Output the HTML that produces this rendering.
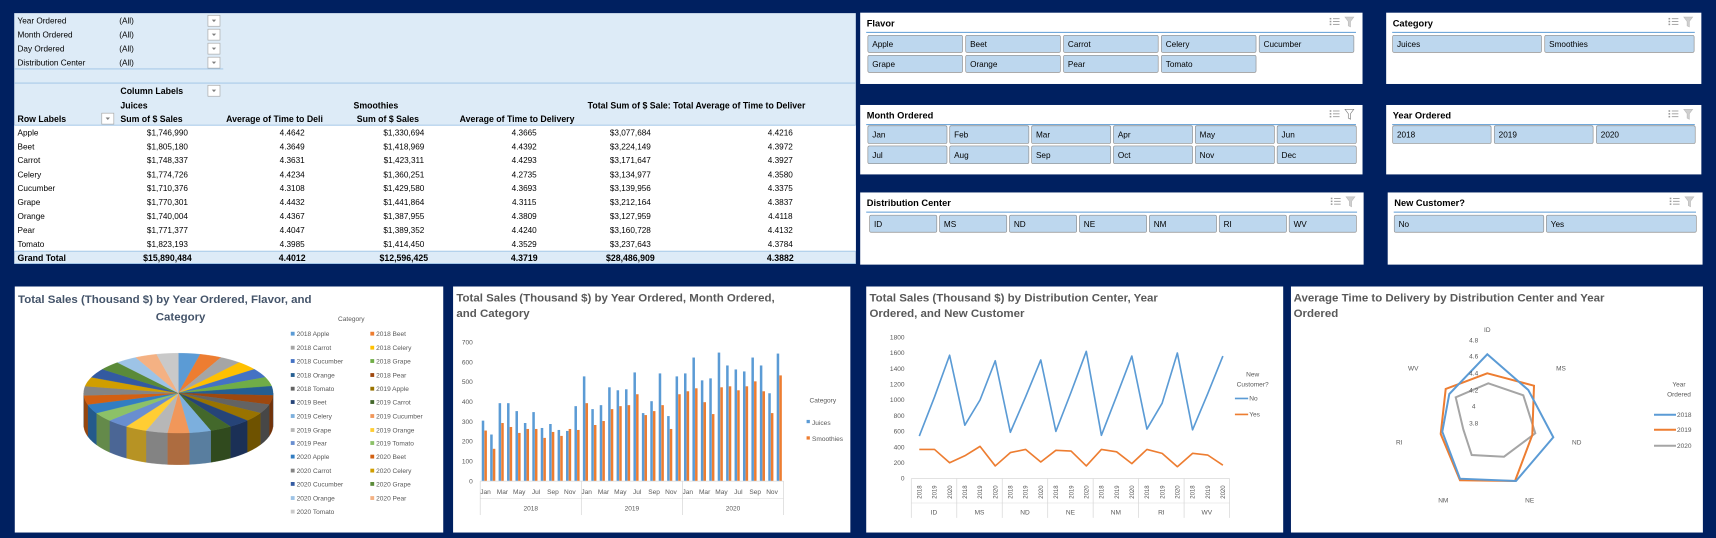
<!DOCTYPE html>
<html><head><meta charset="utf-8"><style>
html,body{margin:0;padding:0;background:#002060;}
svg{display:block;font-family:"Liberation Sans",sans-serif;}
</style></head><body>
<svg id="s" width="1716" height="538" viewBox="0 0 1716 538" xmlns="http://www.w3.org/2000/svg">
<rect width="1716" height="538" fill="#002060"/>
<g id="d" transform="scale(1.0944,1.0935)">
<!-- pivot -->
<rect x="13" y="12" width="769" height="229" fill="#ddebf7"/>
<rect x="13" y="114.5" width="769" height="115" fill="#ffffff"/>
<line x1="13" y1="63" x2="204" y2="63" stroke="#9bc2e6" stroke-width="0.8"/>
<line x1="13" y1="76" x2="782" y2="76" stroke="#9bc2e6" stroke-width="0.8"/>
<line x1="13" y1="114.5" x2="782" y2="114.5" stroke="#9bc2e6" stroke-width="0.8"/>
<line x1="13" y1="229.7" x2="782" y2="229.7" stroke="#9bc2e6" stroke-width="0.8"/>
<line x1="13" y1="241" x2="782" y2="241" stroke="#9bc2e6" stroke-width="0.8"/>
<g id="piv" font-size="7.5" fill="#000"></g>
<!-- slicers -->
<g id="sl"></g>
<!-- charts -->
<rect x="13.5" y="262" width="391.5" height="225" fill="#fff"/>
<rect x="414" y="262" width="363" height="225" fill="#fff"/>
<rect x="791.5" y="262" width="381" height="225" fill="#fff"/>
<rect x="1179.6" y="262" width="376.4" height="225" fill="#fff"/>
<g font-weight="bold" font-size="10.5" fill="#595959">
<text x="16.5" y="277" fill="#44546a">Total Sales (Thousand $) by Year Ordered, Flavor, and</text>
<text x="165" y="293" text-anchor="middle" fill="#44546a">Category</text>
<text x="417" y="275.5">Total Sales (Thousand $) by Year Ordered, Month Ordered,</text>
<text x="417" y="290">and Category</text>
<text x="794.5" y="275.5">Total Sales (Thousand $) by Distribution Center, Year</text>
<text x="794.5" y="290">Ordered, and New Customer</text>
<text x="1182" y="275.5">Average Time to Delivery by Distribution Center and Year</text>
<text x="1182" y="290">Ordered</text>
</g>
<g id="pie"></g>
<g id="bar" font-size="6" fill="#595959"></g>
<g id="line" font-size="6" fill="#595959"></g>
</g>
<g id="radar" font-size="6.5" fill="#595959"></g>
</svg>
<script>
var NS="http://www.w3.org/2000/svg";
function el(p,t,a,txt){var e=document.createElementNS(NS,t);for(var k in a)e.setAttribute(k,a[k]);if(txt!==undefined)e.textContent=txt;p.appendChild(e);return e;}
function dd(p,x,y){el(p,'rect',{x:x,y:y,width:11,height:10,fill:'#fff',stroke:'#a6a6a6','stroke-width':0.6});el(p,'path',{d:'M'+(x+3.5)+' '+(y+4)+'h4l-2 2.2z',fill:'#7f7f7f'});}
// pivot
var pv=document.getElementById('piv');
var fl=['Year Ordered','Month Ordered','Day Ordered','Distribution Center'],fy=[19,31.7,44.5,57.3];
fl.forEach(function(t,i){el(pv,'text',{x:16,y:fy[i]+2.7},t);el(pv,'text',{x:109,y:fy[i]+2.7},'(All)');dd(pv,190,fy[i]-5);});
var b={'font-weight':'bold','font-size':8};
function bt(x,y,t,a){var o={x:x,y:y,'font-weight':'bold','font-size':8};if(a)o['text-anchor']=a;return el(pv,'text',o,t);}
bt(110,86,'Column Labels');dd(pv,190,78);
bt(110,99,'Juices');bt(323,99,'Smoothies');bt(537,99,'Total Sum of $ Sale: Total Average of Time to Deliver');
bt(16,111.5,'Row Labels');dd(pv,93,103.5);bt(110,111.5,'Sum of $ Sales');bt(206.6,111.5,'Average of Time to Deli');bt(326,111.5,'Sum of $ Sales');bt(420,111.5,'Average of Time to Delivery');
var rows=[['Apple','$1,746,990','4.4642','$1,330,694','4.3665','$3,077,684','4.4216'],['Beet','$1,805,180','4.3649','$1,418,969','4.4392','$3,224,149','4.3972'],['Carrot','$1,748,337','4.3631','$1,423,311','4.4293','$3,171,647','4.3927'],['Celery','$1,774,726','4.4234','$1,360,251','4.2735','$3,134,977','4.3580'],['Cucumber','$1,710,376','4.3108','$1,429,580','4.3693','$3,139,956','4.3375'],['Grape','$1,770,301','4.4432','$1,441,864','4.3115','$3,212,164','4.3837'],['Orange','$1,740,004','4.4367','$1,387,955','4.3809','$3,127,959','4.4118'],['Pear','$1,771,377','4.4047','$1,389,352','4.4240','$3,160,728','4.4132'],['Tomato','$1,823,193','4.3985','$1,414,450','4.3529','$3,237,643','4.3784']];
var cx=[153,267,369,479,576,713];
rows.forEach(function(r,i){var y=121+i*12.8+2.7;el(pv,'text',{x:16,y:y},r[0]);for(var j=1;j<7;j++)el(pv,'text',{x:cx[j-1],y:y,'text-anchor':'middle'},r[j]);});
var gt=['$15,890,484','4.4012','$12,596,425','4.3719','$28,486,909','4.3882'];
bt(16,238.5,'Grand Total');gt.forEach(function(t,j){bt(cx[j],238.5,t,'middle');});
// slicers
var sl=document.getElementById('sl');
function slicer(x,y,w,h,title,btns,rowsY,bh,funnelDark){
 el(sl,'rect',{x:x,y:y,width:w,height:h,fill:'#fff'});
 el(sl,'text',{x:x+6,y:y+12.5,'font-weight':'bold','font-size':8.5},title);
 el(sl,'line',{x1:x+5.5,y1:y+18,x2:x+w-6,y2:y+18,stroke:'#5b9bd5','stroke-width':0.9});
 var ix=x+w-30,iy=y+4;
 for(var k=0;k<3;k++){el(sl,'line',{x1:ix+3,y1:iy+1.5+k*2.6,x2:ix+9,y2:iy+1.5+k*2.6,stroke:'#9a9a9a','stroke-width':0.8});el(sl,'rect',{x:ix,y:iy+0.8+k*2.6,width:1.5,height:1.4,fill:'#9a9a9a'});}
 el(sl,'path',{d:'M'+(ix+14)+' '+iy+'h8l-3 4v5l-2 -1v-4z',fill:funnelDark?'none':'#cfcfcf',stroke:funnelDark?'#7f7f7f':'#bdbdbd','stroke-width':0.6});
 btns.forEach(function(bb){el(sl,'rect',{x:bb[0],y:bb[1],width:bb[2],height:bh,rx:1.5,fill:'#bdd7ee',stroke:'#8f8f8f','stroke-width':0.6});el(sl,'text',{x:bb[0]+4,y:bb[1]+bh/2+2.8,'font-size':7.5},bb[3]);});
}
function grid(names,x0,step,w,ys,perRow){return names.map(function(n,i){return [x0+(i%perRow)*step,ys[Math.floor(i/perRow)],w,n];});}
slicer(786,11.6,459,65.2,'Flavor',grid(['Apple','Beet','Carrot','Celery','Cucumber','Grape','Orange','Pear','Tomato'],793,89.4,86.5,[32.3,50.6],5),0,15.6);
slicer(1266.6,11.6,288,65.2,'Category',[[1272.5,32.3,136,'Juices'],[1411.5,32.3,136.5,'Smoothies']],0,15.6);
slicer(786,96,459,63.5,'Month Ordered',grid(['Jan','Feb','Mar','Apr','May','Jun','Jul','Aug','Sep','Oct','Nov','Dec'],793,74.8,72.3,[115,133.5],6),0,16.2,true);
slicer(1266.6,96,288,63.5,'Year Ordered',[[1272.5,115,90,'2018'],[1365.4,115,90.3,'2019'],[1458.7,115,90.3,'2020']],0,16.2);
slicer(786,176,460,66,'Distribution Center',grid(['ID','MS','ND','NE','NM','RI','WV'],794.6,63.9,61.4,[196.8],7),0,15.6);
slicer(1268,176,287.7,66,'New Customer?',[[1274,196.8,136.6,'No'],[1413,196.8,137,'Yes']],0,15.6);
// pie
var cols=['#5b9bd5','#ed7d31','#a5a5a5','#ffc000','#4472c4','#70ad47','#255e91','#9e480e','#636363','#997300','#264478','#43682b','#7cafdd','#f1975a','#b7b7b7','#ffcd33','#698ed0','#8cc168','#327dc2','#d26012','#848484','#d09e00','#335aa1','#5a8a39','#9dc3e6','#f4b183','#c9c9c9'];
var names=[];['2018','2019','2020'].forEach(function(y){['Apple','Beet','Carrot','Celery','Cucumber','Grape','Orange','Pear','Tomato'].forEach(function(f){names.push(y+' '+f);});});
function dark(c,f){var n=parseInt(c.slice(1),16);var r=(n>>16)*f|0,g=((n>>8)&255)*f|0,bb=(n&255)*f|0;return 'rgb('+r+','+g+','+bb+')';}
var pie=document.getElementById('pie');var PX=163,PY=359.5,RX=86.5,RY=36.5,DP=29,N=27;
function P(t,dy){return [PX+RX*Math.sin(t),PY-RY*Math.cos(t)+(dy||0)];}
for(var i=0;i<N;i++){var a1=i*2*Math.PI/N,a2=(i+1)*2*Math.PI/N;var s=Math.max(a1,Math.PI/2),e=Math.min(a2,3*Math.PI/2);
 if(s<e){var pts=[];for(var k=0;k<=8;k++){pts.push(P(s+(e-s)*k/8));}for(var k=8;k>=0;k--){pts.push(P(s+(e-s)*k/8,DP));}
 el(pie,'path',{d:'M'+pts.map(function(p){return p[0].toFixed(2)+' '+p[1].toFixed(2);}).join('L')+'Z',fill:dark(cols[i],0.72),stroke:dark(cols[i],0.72),'stroke-width':0.3});}}
for(var i=0;i<N;i++){var a1=i*2*Math.PI/N,a2=(i+1)*2*Math.PI/N;var pts=[[PX,PY]];for(var k=0;k<=6;k++)pts.push(P(a1+(a2-a1)*k/6));
 el(pie,'path',{d:'M'+pts.map(function(p){return p[0].toFixed(2)+' '+p[1].toFixed(2);}).join('L')+'Z',fill:cols[i],stroke:cols[i],'stroke-width':0.3});}
el(pie,'text',{x:321,y:293.5,'font-size':6,fill:'#595959','text-anchor':'middle'},'Category');
var ly=[305.6,318.4,330.6,343.4,355.9,368.1,380.9,393.7,405.6,418,430.8,443,455.9,468.3];
names.forEach(function(n,i){var r=Math.floor(i/2),c=i%2;var x=c?338.4:265.7;el(pie,'rect',{x:x,y:ly[r]-2.2,width:3.5,height:3.5,fill:cols[i]});el(pie,'text',{x:x+5.3,y:ly[r]+1.8,'font-size':6,fill:'#595959'},n);});
// bar chart
var bar=document.getElementById('bar');
var J=[305,235,393,393,353,293,348,268,288,258,253,378,528,363,383,473,458,463,548,343,403,543,328,528,543,623,508,518,648,583,563,553,623,583,443,643];
var S=[255,163,293,273,243,263,263,218,248,228,263,258,393,283,303,363,378,383,438,333,353,383,263,438,453,468,398,338,473,478,458,478,503,453,343,533];
var bx0=438.8,bx1=716,by0=440,bk=127/700,sw=(bx1-bx0)/36;
for(var v=0;v<=700;v+=100)el(bar,'text',{x:432,y:by0-v*bk+2,'text-anchor':'end'},v);
for(var i=0;i<36;i++){var x=bx0+i*sw;el(bar,'rect',{x:x+1.4,y:by0-J[i]*bk,width:2.3,height:J[i]*bk,fill:'#5b9bd5'});el(bar,'rect',{x:x+3.8,y:by0-S[i]*bk,width:2.3,height:S[i]*bk,fill:'#ed7d31'});
 if(i%2==0)el(bar,'text',{x:x+sw/2+1,y:452,'text-anchor':'middle'},['Jan','Mar','May','Jul','Sep','Nov'][(i%12)/2]);}
el(bar,'line',{x1:bx0,y1:by0,x2:bx1,y2:by0,stroke:'#d9d9d9','stroke-width':0.7});
for(var k=0;k<4;k++){var x=bx0+k*12*sw;el(bar,'line',{x1:x,y1:by0,x2:x,y2:471,stroke:'#d9d9d9','stroke-width':0.7});}
el(bar,'line',{x1:bx0,y1:456,x2:bx1,y2:456,stroke:'#d9d9d9','stroke-width':0.5});
['2018','2019','2020'].forEach(function(y,k){el(bar,'text',{x:bx0+(k+0.5)*12*sw,y:467,'text-anchor':'middle'},y);});
el(bar,'text',{x:739.7,y:368},'Category');
el(bar,'rect',{x:737,y:384,width:3,height:3,fill:'#5b9bd5'});el(bar,'text',{x:742,y:388.5},'Juices');
el(bar,'rect',{x:737,y:399,width:3,height:3,fill:'#ed7d31'});el(bar,'text',{x:742,y:403.5},'Smoothies');
// line chart
var ln=document.getElementById('line');
var No=[540,1040,1570,680,1000,1500,590,1040,1510,600,1100,1620,550,1050,1560,630,960,1600,620,1080,1560];
var Ye=[370,370,200,290,410,160,330,370,210,360,350,160,370,340,190,370,320,150,320,300,170];
var ly0=437.6,lk=(437.6-308.4)/1800,lx0=832.7,lx1=1123.5;
for(var v=0;v<=1800;v+=200)el(ln,'text',{x:826.5,y:ly0-v*lk+2,'text-anchor':'end'},v);
function pl(a,c){el(ln,'polyline',{points:a.map(function(v,i){return (840+13.87*i).toFixed(1)+','+(ly0-v*lk).toFixed(1);}).join(' '),fill:'none',stroke:c,'stroke-width':1.5,'stroke-linejoin':'round'});}
pl(No,'#5b9bd5');pl(Ye,'#ed7d31');
el(ln,'line',{x1:lx0,y1:ly0,x2:lx1,y2:ly0,stroke:'#d9d9d9','stroke-width':0.7});
el(ln,'line',{x1:lx0,y1:460,x2:lx1,y2:460,stroke:'#d9d9d9','stroke-width':0.5});
var gw=(lx1-lx0)/7;
for(var k=0;k<=7;k++){var x=lx0+k*gw;el(ln,'line',{x1:x,y1:ly0,x2:x,y2:473.6,stroke:'#d9d9d9','stroke-width':0.7});}
['ID','MS','ND','NE','NM','RI','WV'].forEach(function(n,k){el(ln,'text',{x:lx0+(k+0.5)*gw,y:470.5,'text-anchor':'middle'},n);});
for(var i=0;i<21;i++){var x=840+13.87*i;el(ln,'text',{transform:'translate('+(x+2)+',450) rotate(-90)','text-anchor':'middle','font-size':5.5},['2018','2019','2020'][i%3]);}
el(ln,'text',{x:1144.6,y:344.5,'text-anchor':'middle'},'New');el(ln,'text',{x:1144.6,y:353.6,'text-anchor':'middle'},'Customer?');
el(ln,'line',{x1:1128.4,y1:364.4,x2:1140.5,y2:364.4,stroke:'#5b9bd5','stroke-width':1.5});el(ln,'text',{x:1141.5,y:366.4},'No');
el(ln,'line',{x1:1128.4,y1:379,x2:1140.5,y2:379,stroke:'#ed7d31','stroke-width':1.5});el(ln,'text',{x:1141.5,y:381},'Yes');
// radar (real coords)
var rd=document.getElementById('radar');
function Z(a){return a.map(function(p){return (p[0]/3+1380).toFixed(1)+','+(p[1]/3+320).toFixed(1);}).join(' ');}
el(rd,'polygon',{points:Z([[325,190],[430,226],[466,340],[372,410],[275,405],[250,328],[227,232]]),fill:'none',stroke:'#a5a5a5','stroke-width':2});
el(rd,'polygon',{points:Z([[322,160],[462,197],[457,345],[405,483],[240,481],[182,342],[197,207]]),fill:'none',stroke:'#ed7d31','stroke-width':2});
el(rd,'polygon',{points:Z([[322,103],[445,210],[520,352],[408,483],[240,476],[187,335],[208,222]]),fill:'none',stroke:'#5b9bd5','stroke-width':2});
[['ID',1487.3,332],['MS',1561,370.5],['ND',1576.7,444.5],['NE',1529.7,502.5],['NM',1443.3,502.5],['RI',1399.3,444.5],['WV',1413.3,370.5]].forEach(function(t){el(rd,'text',{x:t[1],y:t[2],'text-anchor':'middle'},t[0]);});
[['4.8',342.7],['4.6',358.7],['4.4',375.3],['4.2',392.7],['4',408.7],['3.8',425.3]].forEach(function(t){el(rd,'text',{x:1473.7,y:t[1],'text-anchor':'middle'},t[0]);});
el(rd,'text',{x:1679,y:386.5,'text-anchor':'middle'},'Year');el(rd,'text',{x:1679,y:396.5,'text-anchor':'middle'},'Ordered');
[['2018','#5b9bd5',414.7],['2019','#ed7d31',429.7],['2020','#a5a5a5',445.7]].forEach(function(t){el(rd,'line',{x1:1654,y1:t[2],x2:1676,y2:t[2],stroke:t[1],'stroke-width':2});el(rd,'text',{x:1677,y:t[2]+2.3},t[0]);});
</script>
</body></html>
